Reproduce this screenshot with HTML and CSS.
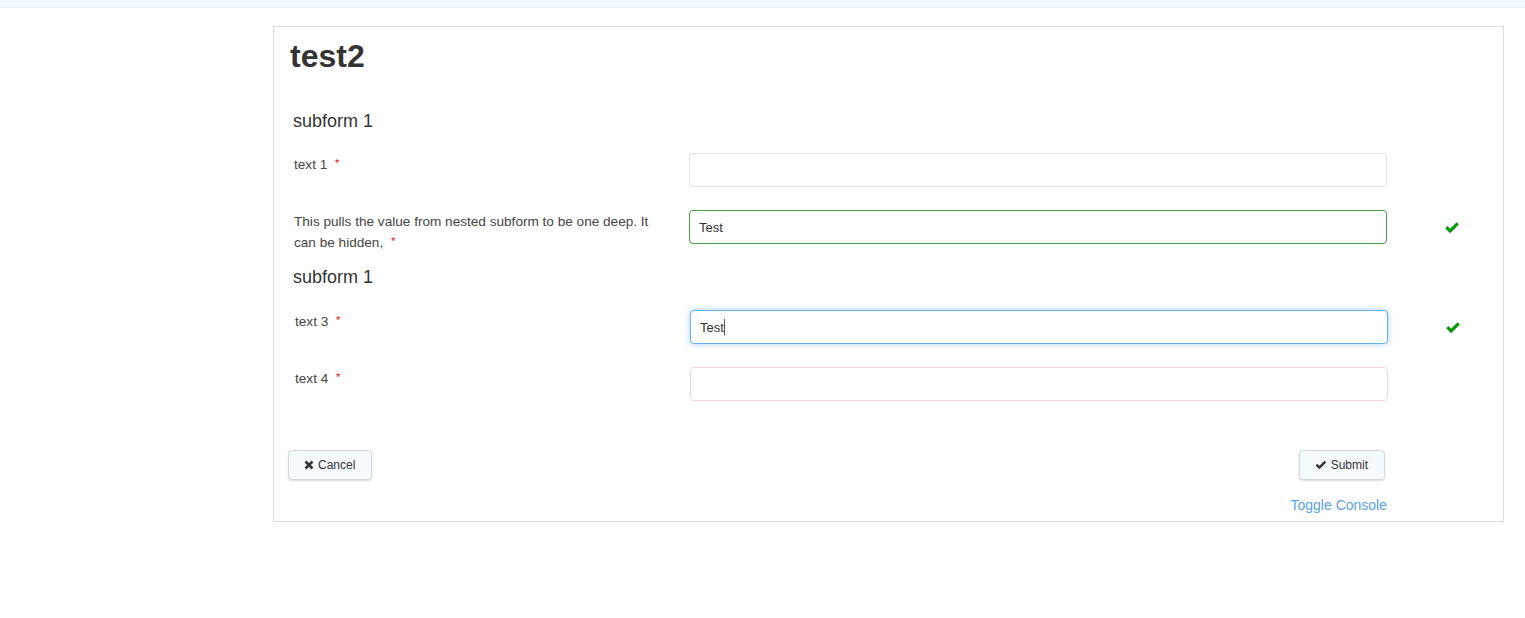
FILE: index.html
```html
<!DOCTYPE html>
<html lang="en">

<head>
    <meta charset="UTF-8" />
    <meta name="viewport" content="width=device-width, initial-scale=1.0" />
    <title>test2</title>
    <link rel="stylesheet" href="styles.css">
</head>

<body>
    <div class="topbar"></div>

    <div class="panel">
        <h1 class="form-title">test2</h1>

        <div class="subform">
            <h4>subform 1</h4>

            <div class="field">
                <label>text 1 <span class="req">*</span></label>
                <input type="text" class="input" value="" />
                <span class="status"></span>
            </div>

            <div class="field before-subform">
                <label>This pulls the value from nested subform to be one deep. It can be hidden, <span class="req">*</span></label>
                <input type="text" class="input valid" value="Test" />
                <span class="status">
                    <svg width="16" height="13" viewBox="0 0 16 13"><path d="M1.2 7.3 L3.4 5.1 L6.1 7.8 L12.6 1.3 L14.8 3.5 L6.1 12.2 Z" fill="#009900"/></svg>
                </span>
            </div>

            <div class="subform nested">
                <h4>subform 1</h4>

                <div class="field">
                    <label>text 3 <span class="req">*</span></label>
                    <div class="input focused">Test<span class="caret"></span></div>
                    <span class="status">
                        <svg width="16" height="13" viewBox="0 0 16 13"><path d="M1.2 7.3 L3.4 5.1 L6.1 7.8 L12.6 1.3 L14.8 3.5 L6.1 12.2 Z" fill="#009900"/></svg>
                    </span>
                </div>

                <div class="field">
                    <label>text 4 <span class="req">*</span></label>
                    <input type="text" class="input invalid" value="" />
                    <span class="status"></span>
                </div>
            </div>
        </div>

        <div class="form-footer">
            <div class="buttons">
                <button class="btn">
                    <svg width="10" height="10" viewBox="0 0 10 10"><path d="M1.5 1.5 L8.5 8.5 M8.5 1.5 L1.5 8.5" stroke="#333" stroke-width="2.6" stroke-linecap="butt"/></svg>
                    Cancel
                </button>
                <button class="btn">
                    <svg width="12" height="10" viewBox="0 0 12 10"><path d="M0.6 5.4 L2.3 3.7 L4.4 5.8 L9.5 0.7 L11.2 2.4 L4.4 9.2 Z" fill="#333"/></svg>
                    Submit
                </button>
            </div>
            <a href="#" class="console-link">Toggle Console</a>
        </div>
    </div>
</body>

</html>
```

FILE: styles.css
```css
body {
    font-family: 'Liberation Sans', Arial, sans-serif;
    margin: 0;
    padding: 0;
    background: white;
    color: #333;
}

.topbar {
    height: 7px;
    background: #f5faff;
    border-bottom: 1px solid #e6f1f7;
}

.panel {
    margin: 18px 0 0 273px;
    width: 1215px;
    border: 1px solid #dcdcdc;
    padding: 0 0 6px 14px;
    box-sizing: content-box;
}

.form-title {
    margin: 11px 0 0 2px;
    font-size: 32px;
    line-height: 36px;
    font-weight: bold;
    color: #333;
}

.subform h4 {
    margin: 37px 0 22px 5px;
    font-size: 18px;
    font-weight: normal;
    line-height: 20px;
    color: #333;
}

.subform.nested {
    padding-left: 1px;
}

.subform.nested h4 {
    margin: 14px 0 23px 4px;
}

.field {
    display: grid;
    grid-template-columns: 396px 698px 80px;
    margin-left: 5px;
    margin-bottom: 23px;
}

.field.before-subform {
    margin-bottom: 0;
}

.field label {
    font-size: 13.6px;
    line-height: 21px;
    padding: 1px 24px 0 1px;
    color: #444;
}

.req {
    color: #e00;
    font-size: 11px;
    line-height: 1;
    vertical-align: 2px;
    margin-left: 4px;
}

.input {
    height: 34px;
    box-sizing: border-box;
    border: 1px solid #e3e3e3;
    border-radius: 4px;
    padding: 0 9px;
    font-family: 'Liberation Sans', Arial, sans-serif;
    font-size: 13px;
    color: #333;
    background: white;
    outline: none;
}

.input.valid {
    border-color: #4a9a4a;
}

.input.focused {
    border-color: #66afe9;
    box-shadow: 0 0 6px rgba(102, 175, 233, 0.6);
    display: flex;
    align-items: center;
}

.input.invalid {
    border-color: #f3d6d6;
}

.caret {
    display: inline-block;
    width: 1px;
    height: 16px;
    background: #555;
}

.status {
    padding: 10px 0 0 57px;
}

.form-footer {
    width: 1099px;
    margin-top: 49px;
    text-align: right;
}

.buttons {
    display: flex;
    justify-content: space-between;
    padding-right: 2px;
}

.btn {
    height: 30px;
    padding: 0 16px 0 15px;
    border: 1px solid #d3d7db;
    border-radius: 4px;
    background: #f5faff;
    box-shadow: 0 1px 2px rgba(0, 0, 0, 0.15);
    font-family: 'Liberation Sans', Arial, sans-serif;
    font-size: 12px;
    color: #333;
    display: flex;
    align-items: center;
    gap: 4px;
}

.console-link {
    display: inline-block;
    margin-top: 15px;
    font-size: 14px;
    line-height: 20px;
    color: #5ba1e3;
    text-decoration: none;
}
```
